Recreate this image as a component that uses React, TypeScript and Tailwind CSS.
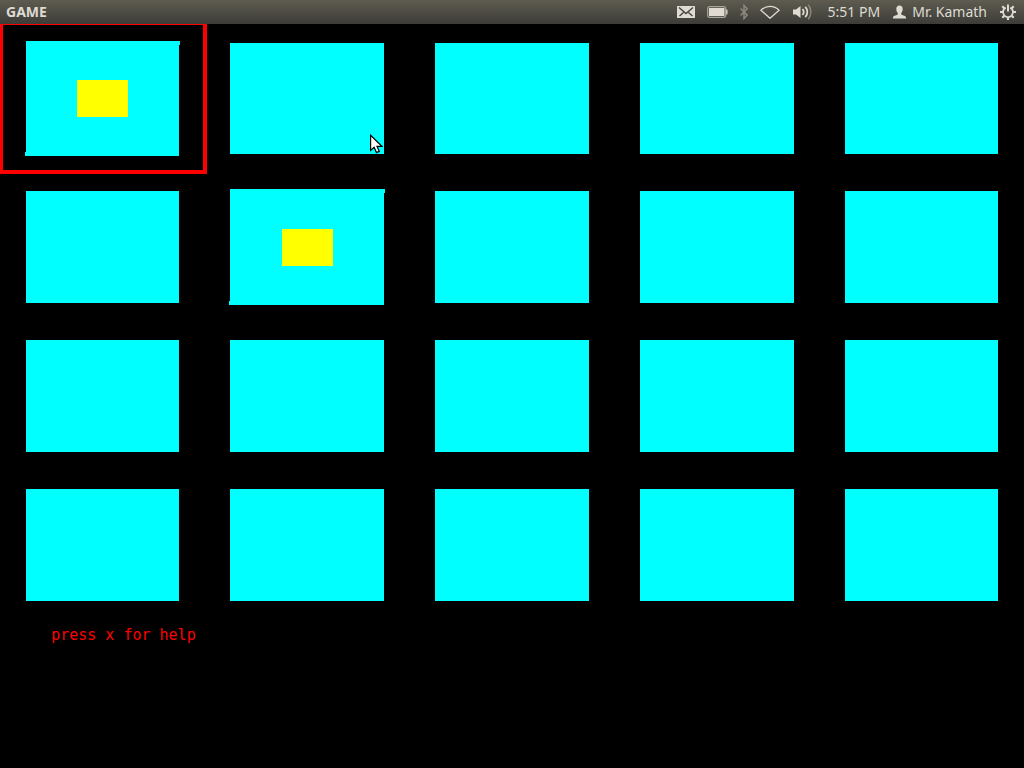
import { useState } from "react";
import clsx from "clsx";

const COLUMNS = 5;
const ROWS = 4;
const FLIPPED = [0, 6];
const POINTED = 1;

function MailIcon() {
  return (
    <svg className="h-3 w-[18px]" viewBox="0 0 18 12" aria-hidden="true">
      <rect width="18" height="12" rx="0.5" fill="#dfdbd2" />
      <path d="M2 1.5 9 7.5l7-6M2.5 10l4-3.5M15.5 10l-4-3.5" fill="none" stroke="#45443f" strokeWidth="1.4" />
    </svg>
  );
}

function BatteryIcon() {
  return (
    <svg className="h-3 w-[21px]" viewBox="0 0 21 12" aria-hidden="true">
      <rect x="0.7" y="0.7" width="18" height="10.6" rx="2" fill="none" stroke="#a9a69d" strokeWidth="1.2" />
      <rect x="2" y="2" width="15.5" height="8" rx="0.5" fill="#dfdbd2" />
      <path d="M19 3.5h.6c.6 0 1 .4 1 1v3c0 .6-.4 1-1 1H19z" fill="#c9c5bc" />
    </svg>
  );
}

function BluetoothIcon() {
  return (
    <svg className="h-4 w-2" viewBox="0 0 8 16" aria-hidden="true">
      <path d="m.6 4.5 6.6 6.6L4 14.6V1.4l3.2 3.4L.6 11.4" fill="none" stroke="#8a877e" strokeWidth="1.5" />
    </svg>
  );
}

function WifiIcon() {
  return (
    <svg className="h-[14px] w-5" viewBox="0 0 20 14" aria-hidden="true">
      <path d="M.9 5.2C6 .1 14 .1 19.1 5.2L10 13.2z" fill="none" stroke="#dfdbd2" strokeWidth="1.3" strokeLinejoin="round" />
    </svg>
  );
}

function VolumeIcon() {
  return (
    <svg className="h-4 w-5" viewBox="0 0 20 16" aria-hidden="true">
      <path d="M1 5.5h3L8.5 2v12L4 10.500H1z" fill="#dfdbd2" />
      <path d="M10.5 5c1.5 1.8 1.5 4.2 0 6" fill="none" stroke="#dfdbd2" strokeWidth="1.8" />
      <path d="M13.3 2.8c2.7 3 2.7 7.4 0 10.4" fill="none" stroke="#dfdbd2" strokeWidth="1.8" />
      <path d="M16.3.8c3.400 4.3 3.400 10.100 0 14.4" fill="none" stroke="#8a877e" strokeWidth="1.5" />
    </svg>
  );
}

function PersonIcon() {
  return (
    <svg className="h-[14px] w-[13px]" viewBox="0 0 13 14" aria-hidden="true">
      <path
        d="M6.5.5c2.100 0 3.200 1.500 3.200 3.500 0 1.800-.6 3-1.500 4v1.200c0 .9 4.800 1.200 4.800 3.300v.9H0v-.9c0-2.100 4.800-2.400 4.800-3.300V8c-.9-1-1.500-2.200-1.500-4 0-2 1.100-3.500 3.200-3.500z"
        fill="#dfdbd2"
      />
    </svg>
  );
}

function SessionIcon() {
  return (
    <svg className="size-4" viewBox="0 0 16 16" fill="none" stroke="#dfdbd2" aria-hidden="true">
      <path d="M5.7 3.6a5 5 0 1 0 4.600 0" strokeWidth="1.8" />
      <path d="M8 .5V7.5" strokeWidth="2" />
      <path
        d="M0 8h3M13 8h3M8 13v3M2.300 2.300l2 2M13.700 2.300l-2 2M2.300 13.700l2-2M13.700 13.700l-2-2"
        strokeWidth="2.2"
      />
    </svg>
  );
}

function Pointer() {
  return (
    <svg className="absolute left-[91%] top-[82%] h-5 w-[13px]" viewBox="0 0 13 20" aria-hidden="true">
      <path
        d="M.6 1.2v15.3l3.5-3.2 2.4 5.3 2.8-1.2-2.3-5.1h4.9z"
        fill="#fff"
        stroke="#000"
        strokeWidth="1.2"
      />
    </svg>
  );
}

function TopBar() {
  return (
    <header className="flex h-6 shrink-0 items-center justify-between bg-linear-to-b from-[#5e5c50] to-[#3d3c38] pl-1.5 pr-2 text-sm text-[#dfdbd2]">
      <h1 className="font-bold">GAME</h1>
      <nav aria-label="Indicators" className="flex items-center gap-3">
        <button type="button" aria-label="Messages"><MailIcon /></button>
        <button type="button" aria-label="Battery"><BatteryIcon /></button>
        <button type="button" aria-label="Bluetooth"><BluetoothIcon /></button>
        <button type="button" aria-label="Network"><WifiIcon /></button>
        <button type="button" aria-label="Sound"><VolumeIcon /></button>
        <button type="button" className="ml-1">5:51 PM</button>
        <button type="button" className="flex items-center gap-1.5 px-px">
          <PersonIcon />
          Mr. Kamath
        </button>
        <button type="button" aria-label="Session"><SessionIcon /></button>
      </nav>
    </header>
  );
}

type CardProps = {
  index: number;
  flipped: boolean;
  selected: boolean;
  onSelect: () => void;
};

function Card({ index, flipped, selected, onSelect }: CardProps) {
  return (
    <div className="relative grid grid-cols-[1fr_6fr_1fr] grid-rows-[1fr_6fr_1fr]">
      {selected && (
        <span className="absolute -bottom-px -right-0.5 left-0 top-0 border-b-4 border-l-[3px] border-r-4 border-t border-[#ff0000]" />
      )}
      <button
        type="button"
        aria-label={`Card ${index + 1}`}
        onClick={onSelect}
        className={clsx(
          "relative col-start-2 row-start-2 bg-[#00ffff]",
          flipped && "grid grid-cols-3 grid-rows-3",
        )}
      >
        {flipped && (
          <>
            {/* heavy outline of an open card, a little out of line with its face */}
            <span className="absolute -right-px -top-0.5 left-0 h-1 bg-[#00ffff]" />
            <span className="absolute -bottom-0.5 -left-px right-0 h-1 bg-[#00ffff]" />
            <span className="col-start-2 row-start-2 bg-[#ffff00]" />
          </>
        )}
        {index === POINTED && <Pointer />}
      </button>
    </div>
  );
}

export default function App() {
  const [selected, setSelected] = useState(0);

  return (
    <div className="flex min-h-screen flex-col bg-black font-['Noto_Sans',sans-serif]">
      <TopBar />
      <main className="grid flex-1 grid-cols-5 grid-rows-5">
        {Array.from({ length: COLUMNS * ROWS }, (_, i) => (
          <Card
            key={i}
            index={i}
            flipped={FLIPPED.includes(i)}
            selected={i === selected}
            onSelect={() => setSelected(i)}
          />
        ))}
        <p className="col-span-5 pl-[5%] pt-1 font-['DejaVu_Sans_Mono',monospace] text-[15px] leading-6 text-[#ff0000]">
          press x for help
        </p>
      </main>
    </div>
  );
}
